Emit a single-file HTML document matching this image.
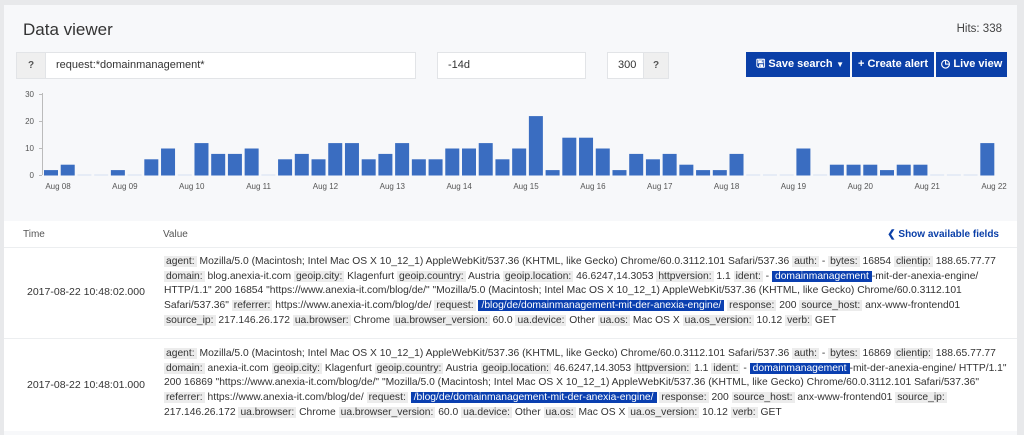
<!DOCTYPE html>
<html><head><meta charset="utf-8"><style>
*{box-sizing:border-box;margin:0;padding:0}
body{width:1024px;height:431px;overflow:hidden;background:#e8e9eb;font-family:"Liberation Sans",sans-serif;color:#333;position:relative}
.panel{position:absolute;left:4px;top:5px;width:1013px;height:430px;background:#f7f8fa}
.abs{position:absolute}
h1{position:absolute;left:23px;top:20px;font-size:17px;font-weight:normal;color:#333}
.hits{position:absolute;right:22px;top:23px;font-size:11.5px;color:#444}
.box{position:absolute;top:52px;height:27px;background:#fff;border:1px solid #e2e4e7;font-size:11px;line-height:25px;padding-left:10px;color:#333}
.q{position:absolute;top:52px;height:27px;background:#efefef;border:1px solid #e2e4e7;font-size:10px;font-weight:bold;line-height:25px;text-align:center;color:#555}
.btn{position:absolute;top:52px;height:25px;background:#0a3fa8;color:#fff;font-size:11px;font-weight:bold;line-height:25px;text-align:center}
.table{position:absolute;left:4px;top:221px;width:1013px;height:210px;background:#fff}
.th{position:absolute;top:8px;font-size:10px;color:#555}
.row{position:absolute;left:4px;width:1013px;border-top:1px solid #eceef0}
.time{position:absolute;left:23px;font-size:10.5px;color:#333}
.val{position:absolute;left:160px;font-size:10.3px;line-height:14.7px;color:#333;white-space:nowrap}
.k{background:#ececec;padding:0 2px}
.h{background:#0a3fb0;color:#fff;padding:0 3px}
</style></head><body>
<div class="panel"></div>
<h1>Data viewer</h1>
<div class="hits">Hits: 338</div>
<div class="q" style="left:16px;width:30px">?</div>
<div class="box" style="left:45px;width:371px">request:*domainmanagement*</div>
<div class="box" style="left:437px;width:149px">-14d</div>
<div class="box" style="left:607px;width:37px">300</div>
<div class="q" style="left:643px;width:26px">?</div>
<div class="btn" style="left:746px;width:104px;text-align:left;padding-left:10px">&#128427; Save search <span style="position:absolute;right:6px;font-size:8px">&#9660;</span></div>
<div class="btn" style="left:852px;width:82px">+ Create alert</div>
<div class="btn" style="left:936px;width:71px">&#9719; Live view</div>
<svg class="abs" style="left:0;top:85px" width="1024" height="110">
<g font-family="Liberation Sans" font-size="8" fill="#555" text-anchor="end">
<text x="34" y="12">30</text><text x="34" y="39">20</text><text x="34" y="66">10</text><text x="34" y="93">0</text>
</g>
<line x1="42.5" y1="8" x2="42.5" y2="90" stroke="#bbb"/>
<g stroke="#bbb"><line x1="39" y1="9.5" x2="42" y2="9.5"/><line x1="39" y1="36.5" x2="42" y2="36.5"/><line x1="39" y1="63.5" x2="42" y2="63.5"/><line x1="39" y1="90.5" x2="42" y2="90.5"/></g>
<g id="bars" fill="#3a6dc1"></g>
<g font-family="Liberation Sans" font-size="8" fill="#555" text-anchor="middle" id="lbl"></g>
</svg>
<script>
var v=[2,4,0,0,2,0,6,10,0,12,8,8,10,0,6,8,6,12,12,6,8,12,6,6,10,10,12,6,10,22,2,14,14,10,2,8,6,8,4,2,2,8,0,0,0,10,0,4,4,4,2,4,4,0,0,0,12];
var s='';for(var i=0;i<v.length;i++){var x=44+i*16.72;var h=v[i]*2.7;if(h==0)s+='<rect x="'+x+'" y="89.5" width="14" height="1" fill="#d6e0f2"/>';else s+='<rect x="'+x+'" y="'+(90.5-h)+'" width="14" height="'+h+'"/>';}
document.getElementById('bars').innerHTML=s;
var l='';for(var d=0;d<15;d++){var n=8+d;l+='<text x="'+(58+d*66.86)+'" y="104">Aug '+(n<10?'0'+n:n)+'</text>';}
document.getElementById('lbl').innerHTML=l;
</script>
<div class="table">
<div class="th" style="left:19px">Time</div>
<div class="th" style="left:159px">Value</div>
<div class="th" style="right:18px;color:#0a3fa8;font-weight:bold">&#10094; Show available fields</div>
</div>
<div class="row" style="top:247px;height:91px">
<div class="time" style="top:38px">2017-08-22 10:48:02.000</div>
<div class="val" style="top:7px">
<div><span class="k">agent:</span> Mozilla/5.0 (Macintosh; Intel Mac OS X 10_12_1) AppleWebKit/537.36 (KHTML, like Gecko) Chrome/60.0.3112.101 Safari/537.36 <span class="k">auth:</span> - <span class="k">bytes:</span> 16854 <span class="k">clientip:</span> 188.65.77.77</div>
<div><span class="k">domain:</span> blog.anexia-it.com <span class="k">geoip.city:</span> Klagenfurt <span class="k">geoip.country:</span> Austria <span class="k">geoip.location:</span> 46.6247,14.3053 <span class="k">httpversion:</span> 1.1 <span class="k">ident:</span> - <span class="h">domainmanagement</span>-mit-der-anexia-engine/</div>
<div>HTTP/1.1" 200 16854 "https://www.anexia-it.com/blog/de/" "Mozilla/5.0 (Macintosh; Intel Mac OS X 10_12_1) AppleWebKit/537.36 (KHTML, like Gecko) Chrome/60.0.3112.101</div>
<div>Safari/537.36" <span class="k">referrer:</span> https://www.anexia-it.com/blog/de/ <span class="k">request:</span> <span class="h">/blog/de/domainmanagement-mit-der-anexia-engine/</span> <span class="k">response:</span> 200 <span class="k">source_host:</span> anx-www-frontend01</div>
<div><span class="k">source_ip:</span> 217.146.26.172 <span class="k">ua.browser:</span> Chrome <span class="k">ua.browser_version:</span> 60.0 <span class="k">ua.device:</span> Other <span class="k">ua.os:</span> Mac OS X <span class="k">ua.os_version:</span> 10.12 <span class="k">verb:</span> GET</div>
</div>
</div>
<div class="row" style="top:338px;height:93px">
<div class="time" style="top:40px">2017-08-22 10:48:01.000</div>
<div class="val" style="top:8px">
<div><span class="k">agent:</span> Mozilla/5.0 (Macintosh; Intel Mac OS X 10_12_1) AppleWebKit/537.36 (KHTML, like Gecko) Chrome/60.0.3112.101 Safari/537.36 <span class="k">auth:</span> - <span class="k">bytes:</span> 16869 <span class="k">clientip:</span> 188.65.77.77</div>
<div><span class="k">domain:</span> anexia-it.com <span class="k">geoip.city:</span> Klagenfurt <span class="k">geoip.country:</span> Austria <span class="k">geoip.location:</span> 46.6247,14.3053 <span class="k">httpversion:</span> 1.1 <span class="k">ident:</span> - <span class="h">domainmanagement</span>-mit-der-anexia-engine/ HTTP/1.1"</div>
<div>200 16869 "https://www.anexia-it.com/blog/de/" "Mozilla/5.0 (Macintosh; Intel Mac OS X 10_12_1) AppleWebKit/537.36 (KHTML, like Gecko) Chrome/60.0.3112.101 Safari/537.36"</div>
<div><span class="k">referrer:</span> https://www.anexia-it.com/blog/de/ <span class="k">request:</span> <span class="h">/blog/de/domainmanagement-mit-der-anexia-engine/</span> <span class="k">response:</span> 200 <span class="k">source_host:</span> anx-www-frontend01 <span class="k">source_ip:</span></div>
<div>217.146.26.172 <span class="k">ua.browser:</span> Chrome <span class="k">ua.browser_version:</span> 60.0 <span class="k">ua.device:</span> Other <span class="k">ua.os:</span> Mac OS X <span class="k">ua.os_version:</span> 10.12 <span class="k">verb:</span> GET</div>
</div>
</div>
</body></html>
